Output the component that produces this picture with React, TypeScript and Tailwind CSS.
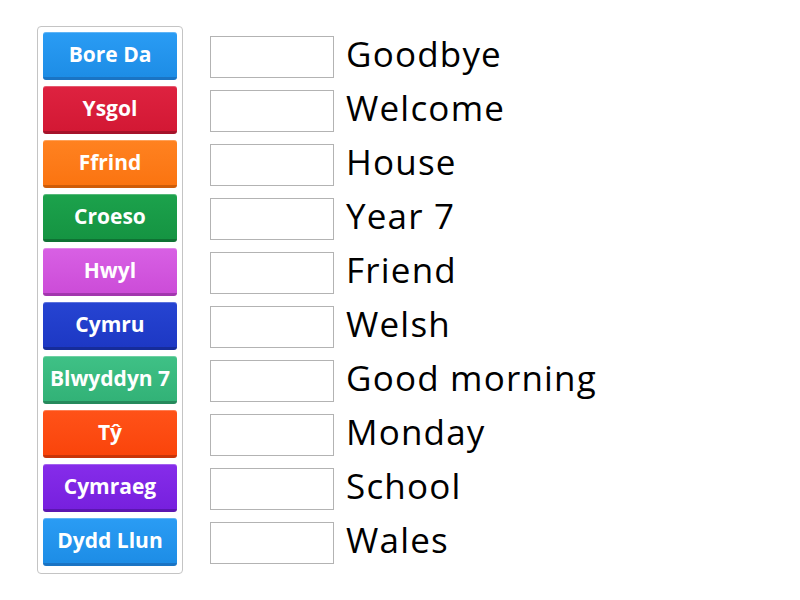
import React from "react";

// Welsh words (left) and English meanings (right)
const tiles = [
  { label: "Bore Da", color: "from-[#2a9cf4] to-[#1d8de6] border-[#1a74c4]" },
  { label: "Ysgol", color: "from-[#de2240] to-[#d31834] border-[#a5122a]" },
  { label: "Ffrind", color: "from-[#ff8220] to-[#fb7410] border-[#cf5c08]" },
  { label: "Croeso", color: "from-[#1ca24c] to-[#159442] border-[#0f7133]" },
  { label: "Hwyl", color: "from-[#d860e4] to-[#cc4cd8] border-[#a236ae]" },
  { label: "Cymru", color: "from-[#2644d2] to-[#1d38c4] border-[#162c9a]" },
  { label: "Blwyddyn 7", color: "from-[#3fc186] to-[#32b277] border-[#26895c]" },
  { label: "Tŷ", color: "from-[#ff5218] to-[#fa440a] border-[#c93408]" },
  { label: "Cymraeg", color: "from-[#862cea] to-[#7720de] border-[#5c16b0]" },
  { label: "Dydd Llun", color: "from-[#2a9cf4] to-[#1d8de6] border-[#1a74c4]" },
];

const meanings = [
  "Goodbye",
  "Welcome",
  "House",
  "Year 7",
  "Friend",
  "Welsh",
  "Good morning",
  "Monday",
  "School",
  "Wales",
];

export default function App() {
  return (
    <div className="w-[800px] h-[600px] bg-white font-['Open_Sans',sans-serif] flex items-start pt-[26px] pl-[37px]">
      <div className="w-[146px] rounded-[4px] border border-[#c4c4c4] px-[5px] pt-[5px] pb-[7px] flex flex-col gap-[6px]">
        {tiles.map((t) => (
          <div
            key={t.label}
            className={`h-[48px] rounded-[3px] border-b-[3px] bg-gradient-to-b ${t.color} flex items-center justify-center text-white font-bold text-[21px] leading-none shadow-[inset_0_1px_0_rgba(255,255,255,0.25)]`}>
            {t.label}
          </div>
        ))}
      </div>

      <div className="ml-[27px] pt-[10px] flex flex-col gap-[12px]">
        {meanings.map((m) => (
          <div key={m} className="flex items-center h-[42px]">
            <div className="w-[124px] h-[42px] border border-[#b3b3b3] bg-white" />
            <span className="ml-[12px] -mt-[7px] text-[35px] leading-none tracking-[1.2px] text-black">
              {m}
            </span>
          </div>
        ))}
      </div>
    </div>
  );
}
